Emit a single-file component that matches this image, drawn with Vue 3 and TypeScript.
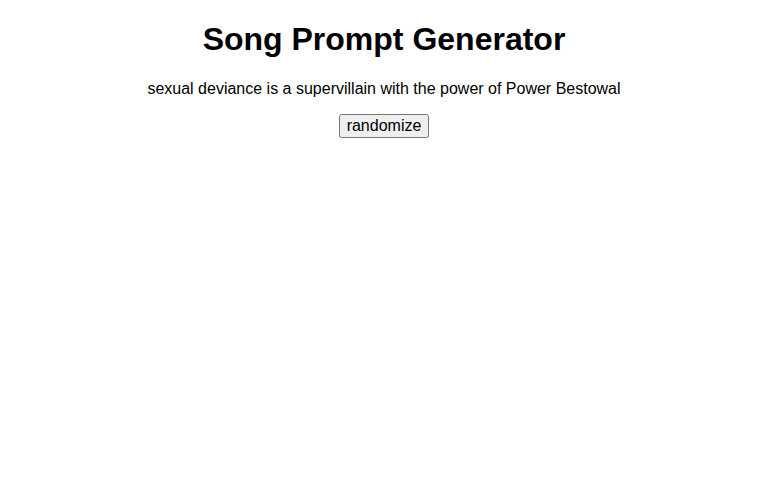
<script setup lang="ts">
import { ref } from 'vue'

const subjects: string[] = ['sexual deviance', 'loneliness', 'summer rain', 'nostalgia']
const powers: string[] = ['Power Bestowal', 'Time Travel', 'Invisibility', 'Flight']

const subject = ref<string>(subjects[0])
const power = ref<string>(powers[0])

function pick(list: string[]): string {
  return list[Math.floor(Math.random() * list.length)]
}

function randomize(): void {
  subject.value = pick(subjects)
  power.value = pick(powers)
}
</script>

<template>
  <main class="generator">
    <h1 class="title">Song Prompt Generator</h1>
    <p class="prompt">{{ subject }} is a supervillain with the power of {{ power }}</p>
    <button class="randomize" type="button" @click="randomize">randomize</button>
  </main>
</template>

<style>
body {
  margin: 0;
  background: #fff;
}
</style>

<style scoped>
.generator {
  display: flex;
  flex-direction: column;
  align-items: center;
  padding: 21px 8px;
  font-family: "Liberation Sans", Arial, sans-serif;
  font-size: 16px;
  color: #000;
  text-align: center;
}

.title {
  margin: 0 0 21px;
  font-size: 32px;
  line-height: 37px;
  font-weight: bold;
}

.prompt {
  margin: 0 0 16px;
  line-height: 19px;
}

.randomize {
  font: inherit;
}
</style>
